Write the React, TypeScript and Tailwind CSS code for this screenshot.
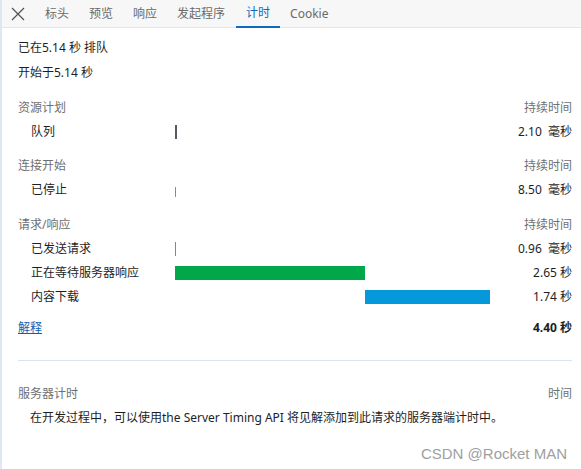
import React from "react";

const font = { fontFamily: '"Noto Sans", "Noto Sans CJK SC", sans-serif' };

function Row({ label, bar, dur }: { label: string; bar: React.ReactNode; dur: string }) {
  return (
    <div className="grid grid-cols-[157px_316px_1fr] h-6 items-center">
      <div className="pl-[13px] text-[#1e1e1e]">{label}</div>
      <div className="relative h-[14px]">{bar}</div>
      <div className="text-right text-[#1e1e1e] whitespace-pre">{dur}</div>
    </div>
  );
}

function Header({ label, right }: { label: string; right: string }) {
  return (
    <div className="flex h-6 items-center justify-between text-[#707070]">
      <span>{label}</span>
      <span>{right}</span>
    </div>
  );
}

export default function App() {
  return (
    <div className="relative w-[581px] h-[469px] bg-white text-[12px] overflow-hidden border-l-2 border-[#dfe7f3]" style={font}>
      <div className="flex h-[28px] items-stretch bg-[#f7f7f7] border-b border-[#e6e6e6] text-[#6a6a6a]">
        <div className="flex w-[43px] items-center pl-[9px]">
          <svg width="14" height="14" viewBox="0 0 14 14" fill="none" stroke="#505050" strokeWidth="1.2">
            <path d="M1 1L13 13M13 1L1 13" />
          </svg>
        </div>
        <div className="flex items-center gap-[20px]">
          <span>标头</span>
          <span>预览</span>
          <span>响应</span>
          <span>发起程序</span>
        </div>
        <div className="flex items-center justify-center ml-[11px] w-[44px] text-[#0f6cbd] border-b-2 border-[#0f6cbd] mb-[-1px]">
          <span>计时</span>
        </div>
        <div className="flex items-center ml-[10px]">
          <span>Cookie</span>
        </div>
      </div>

      <div className="pl-[16px] pr-[9px] pt-[7px]">
        <div className="h-[25px] flex items-center text-[#1e1e1e]">已在5.14 秒 排队</div>
        <div className="h-[25px] flex items-center text-[#1e1e1e]">开始于5.14 秒</div>

        <div className="mt-[11px]">
          <Header label="资源计划" right="持续时间" />
          <Row label="队列" bar={<div className="absolute left-0 top-0 h-[14px] w-[2px] bg-[#555a60]" />} dur="2.10  毫秒" />
        </div>

        <div className="mt-[10px]">
          <Header label="连接开始" right="持续时间" />
          <Row label="已停止" bar={<div className="absolute left-0 top-[4px] h-[10px] w-[1px] bg-[#8a8a8a]" />} dur="8.50  毫秒" />
        </div>

        <div className="mt-[11px]">
          <Header label="请求/响应" right="持续时间" />
          <Row label="已发送请求" bar={<div className="absolute left-0 top-0 h-[14px] w-[1px] bg-[#7a8a90]" />} dur="0.96  毫秒" />
          <Row label="正在等待服务器响应" bar={<div className="absolute left-0 top-0 h-[14px] w-[190px] bg-[#00a84a]" />} dur="2.65 秒" />
          <Row label="内容下载" bar={<div className="absolute left-[190px] top-0 h-[14px] w-[125px] bg-[#0599db]" />} dur="1.74 秒" />
        </div>

        <div className="mt-[7px] flex h-6 items-center justify-between">
          <a className="text-[#0f5fb3] underline">解释</a>
          <span className="font-bold text-[#1e1e1e]">4.40 秒</span>
        </div>

        <div className="mt-[20px] border-t border-[#d7e4f4]" />

        <div className="mt-[21px]">
          <Header label="服务器计时" right="时间" />
          <div className="h-6 flex items-center pl-[12px] text-[#1e1e1e]">
            在开发过程中，可以使用the Server Timing API 将见解添加到此请求的服务器端计时中。
          </div>
        </div>
      </div>

      <div className="absolute right-[14px] top-[443px] text-[15px] text-[#a0a0a0]" style={{ fontFamily: '"Liberation Sans", Arial, sans-serif' }}>
        CSDN @Rocket MAN
      </div>
    </div>
  );
}
